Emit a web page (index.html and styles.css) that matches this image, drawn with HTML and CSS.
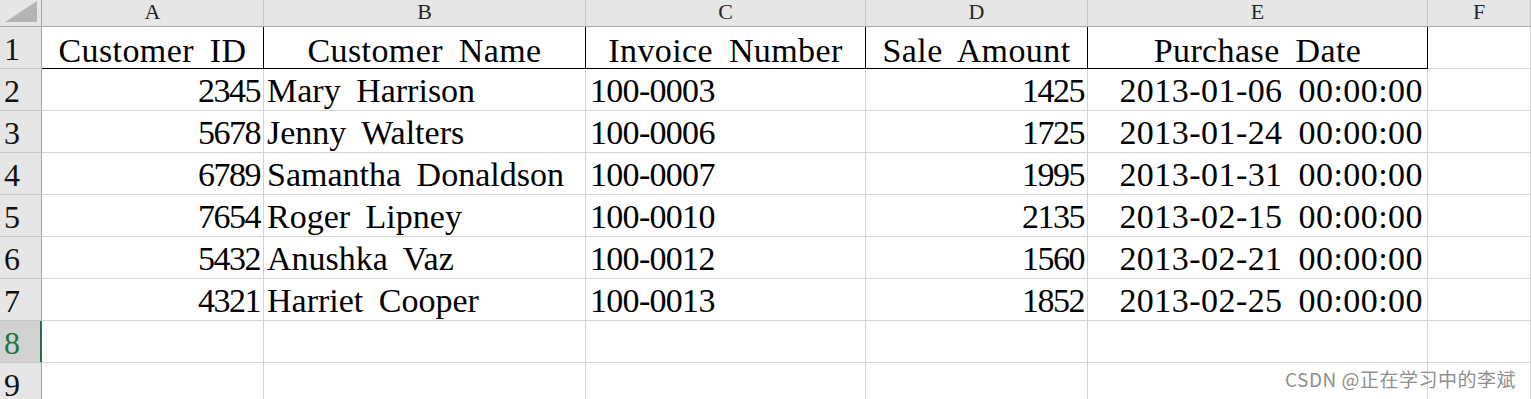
FILE: index.html
```html
<!DOCTYPE html>
<html lang="en">
<head>
<meta charset="utf-8">
<title>Sheet</title>
<link rel="stylesheet" href="styles.css">
</head>
<body>
<div class="sheet">
  <div class="corner"><svg class="corner-tri" width="42" height="26" viewBox="0 0 42 26"><polygon points="5,22 37,22 37,1" fill="#b4b4b4"/></svg></div>
  <div class="colh">A</div>
  <div class="colh">B</div>
  <div class="colh">C</div>
  <div class="colh">D</div>
  <div class="colh">E</div>
  <div class="colh last">F</div>

  <div class="rowh">1</div>
  <div class="cell head">Customer ID</div>
  <div class="cell head">Customer Name</div>
  <div class="cell head">Invoice Number</div>
  <div class="cell head">Sale Amount</div>
  <div class="cell head">Purchase Date</div>
  <div class="cell"></div>

  <div class="rowh">2</div>
  <div class="cell num">2345</div>
  <div class="cell txt">Mary Harrison</div>
  <div class="cell inv">100-0003</div>
  <div class="cell num">1425</div>
  <div class="cell date">2013-01-06 00:00:00</div>
  <div class="cell"></div>

  <div class="rowh">3</div>
  <div class="cell num">5678</div>
  <div class="cell txt">Jenny Walters</div>
  <div class="cell inv">100-0006</div>
  <div class="cell num">1725</div>
  <div class="cell date">2013-01-24 00:00:00</div>
  <div class="cell"></div>

  <div class="rowh">4</div>
  <div class="cell num">6789</div>
  <div class="cell txt">Samantha Donaldson</div>
  <div class="cell inv">100-0007</div>
  <div class="cell num">1995</div>
  <div class="cell date">2013-01-31 00:00:00</div>
  <div class="cell"></div>

  <div class="rowh">5</div>
  <div class="cell num">7654</div>
  <div class="cell txt">Roger Lipney</div>
  <div class="cell inv">100-0010</div>
  <div class="cell num">2135</div>
  <div class="cell date">2013-02-15 00:00:00</div>
  <div class="cell"></div>

  <div class="rowh">6</div>
  <div class="cell num">5432</div>
  <div class="cell txt">Anushka Vaz</div>
  <div class="cell inv">100-0012</div>
  <div class="cell num">1560</div>
  <div class="cell date">2013-02-21 00:00:00</div>
  <div class="cell"></div>

  <div class="rowh">7</div>
  <div class="cell num">4321</div>
  <div class="cell txt">Harriet Cooper</div>
  <div class="cell inv">100-0013</div>
  <div class="cell num">1852</div>
  <div class="cell date">2013-02-25 00:00:00</div>
  <div class="cell"></div>

  <div class="rowh selected">8</div>
  <div class="cell"></div>
  <div class="cell"></div>
  <div class="cell"></div>
  <div class="cell"></div>
  <div class="cell"></div>
  <div class="cell"></div>

  <div class="rowh">9</div>
  <div class="cell"></div>
  <div class="cell"></div>
  <div class="cell"></div>
  <div class="cell"></div>
  <div class="cell"></div>
  <div class="cell"></div>
</div>
<div class="watermark">CSDN @正在学习中的李斌</div>
</body>
</html>
```
FILE: styles.css
```css
html, body {
  margin: 0;
  padding: 0;
  background: #ffffff;
  overflow: hidden;
}

body {
  width: 1531px;
  height: 399px;
  position: relative;
  font-family: "Liberation Serif", "Times New Roman", serif;
  color: #000;
}

.sheet {
  display: grid;
  grid-template-columns: 42px 222px 322px 280px 222px 340px 1fr;
  grid-template-rows: 27px repeat(9, 42px);
}

.sheet > div {
  box-sizing: border-box;
  border-right: 1px solid #d4d4d4;
  border-bottom: 1px solid #d4d4d4;
  white-space: nowrap;
  overflow: visible;
}

.corner {
  background: #e6e6e6;
  border-right-color: #a6a6a6 !important;
  border-bottom-color: #a6a6a6 !important;
}

.corner-tri {
  display: block;
}

.colh {
  background: #e6e6e6;
  border-right-color: #c6c6c6 !important;
  border-bottom-color: #a6a6a6 !important;
  font-size: 22px;
  line-height: 24px;
  text-align: center;
  color: #262626;
}

.rowh {
  background: #e6e6e6;
  border-right-color: #a6a6a6 !important;
  border-bottom-color: #c8c8c8 !important;
  font-size: 32px;
  line-height: 41px;
  padding: 2px 0 0 4px;
  color: #111;
}

.rowh.selected {
  background: #d2d2d2;
  color: #217346;
  border-right-color: #217346 !important;
  box-shadow: inset -1px 0 0 #217346;
}

.cell {
  font-size: 34px;
  line-height: 41px;
  padding-top: 1px;
  word-spacing: 7px;
}

.cell.head {
  border-right-color: #000 !important;
  border-bottom-color: #000 !important;
  text-align: center;
  padding-top: 3px;
  letter-spacing: 0.4px;
}

.num {
  text-align: right;
  padding-right: 3px;
  letter-spacing: -1.5px;
}

.txt {
  padding-left: 3px;
}

.inv {
  padding-left: 4px;
  letter-spacing: -0.7px;
}

.date {
  text-align: right;
  padding-right: 4px;
  letter-spacing: 0.45px;
}

.watermark {
  position: absolute;
  left: 1285px;
  top: 365px;
  font-family: "Noto Sans CJK SC", "Noto Sans", sans-serif;
  font-size: 19px;
  line-height: 28px;
  letter-spacing: 0.5px;
  color: #8f8f8f;
  white-space: nowrap;
}
```
